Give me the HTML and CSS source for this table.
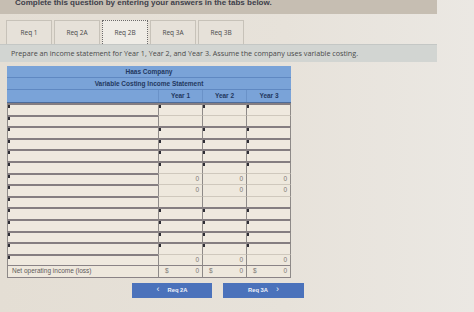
FILE: index.html
```html
<!DOCTYPE html>
<html>
<head>
<meta charset="utf-8">
<link rel="stylesheet" href="styles.css">
</head>
<body>
<div class="page">
  <div class="banner"><span>Complete this question by entering your answers in the tabs below.</span></div>
  <div class="tabs">
    <div class="tab">Req 1</div>
    <div class="tab">Req 2A</div>
    <div class="tab active">Req 2B</div>
    <div class="tab">Req 3A</div>
    <div class="tab">Req 3B</div>
  </div>
  <div class="instr">Prepare an income statement for Year 1, Year 2, and Year 3. Assume the company uses variable costing.</div>
  <div class="sheet">
    <div class="hrow title">Haas Company</div>
    <div class="hrow title">Variable Costing Income Statement</div>
    <div class="hrow cols"><span></span><span>Year 1</span><span>Year 2</span><span>Year 3</span></div>

    <div class="row"><div class="c in"></div><div class="c in"></div><div class="c in"></div><div class="c in"></div></div>
    <div class="row"><div class="c in"></div><div class="c"></div><div class="c"></div><div class="c"></div></div>
    <div class="row"><div class="c in"></div><div class="c in"></div><div class="c in"></div><div class="c in"></div></div>
    <div class="row"><div class="c in"></div><div class="c in"></div><div class="c in"></div><div class="c in"></div></div>
    <div class="row"><div class="c in"></div><div class="c in"></div><div class="c in"></div><div class="c in"></div></div>
    <div class="row"><div class="c in"></div><div class="c in"></div><div class="c in"></div><div class="c in"></div></div>
    <div class="row"><div class="c in"></div><div class="c v">0</div><div class="c v">0</div><div class="c v">0</div></div>
    <div class="row"><div class="c in"></div><div class="c v">0</div><div class="c v">0</div><div class="c v">0</div></div>
    <div class="row"><div class="c in"></div><div class="c"></div><div class="c"></div><div class="c"></div></div>
    <div class="row"><div class="c in"></div><div class="c in"></div><div class="c in"></div><div class="c in"></div></div>
    <div class="row"><div class="c in"></div><div class="c in"></div><div class="c in"></div><div class="c in"></div></div>
    <div class="row"><div class="c in"></div><div class="c in"></div><div class="c in"></div><div class="c in"></div></div>
    <div class="row"><div class="c in"></div><div class="c in"></div><div class="c in"></div><div class="c in"></div></div>
    <div class="row"><div class="c in"></div><div class="c v">0</div><div class="c v">0</div><div class="c v">0</div></div>
    <div class="row last"><div class="c lbl">Net operating income (loss)</div><div class="c v"><span>$</span>0</div><div class="c v"><span>$</span>0</div><div class="c v"><span>$</span>0</div></div>
  </div>
  <div class="nav">
    <div class="btn prev"><span class="chev">&lsaquo;</span>Req 2A</div>
    <div class="btn next">Req 3A<span class="chev">&rsaquo;</span></div>
  </div>
</div>
</body>
</html>
```
FILE: styles.css
```css
html, body {
  margin: 0;
  padding: 0;
}
body {
  width: 474px;
  height: 312px;
  overflow: hidden;
  background: linear-gradient(90deg, #e4ded4 0%, #e7e2da 60%, #ebe8e3 100%);
  font-family: "Open Sans", "Liberation Sans", sans-serif;
  color: #444;
}
.page {
  width: 437px;
  display: flex;
  flex-direction: column;
}
.banner {
  height: 14px;
  background: #c6beb2;
  overflow: hidden;
  padding-left: 15px;
}
.banner span {
  display: block;
  margin-top: -4px;
  font-family: "Liberation Sans", sans-serif;
  font-weight: bold;
  font-size: 8px;
  line-height: 14px;
  color: #3e3e4a;
}
.tabs {
  margin-top: 6px;
  display: flex;
  padding-left: 6px;
  gap: 2px;
  height: 24px;
}
.tab {
  width: 46px;
  height: 24px;
  box-sizing: border-box;
  border: 1px solid #c7c2b9;
  border-bottom: none;
  background: #e6e1d9;
  font-size: 6.5px;
  color: #4a4a4a;
  display: flex;
  align-items: center;
  justify-content: center;
}
.tab.active {
  background: #efece6;
  border: 1px dotted #6c6a6a;
  border-bottom: none;
}
.instr {
  height: 18px;
  background: #d2d5d2;
  border-top: 1px solid #c4c7c5;
  box-sizing: border-box;
  padding-left: 11px;
  font-size: 7.2px;
  line-height: 17px;
  color: #4a4a4a;
}
.sheet {
  margin-top: 4px;
  margin-left: 7px;
  width: 284px;
  display: flex;
  flex-direction: column;
  font-family: "Liberation Sans", sans-serif;
}
.hrow {
  height: 12px;
  box-sizing: border-box;
  background: #7aa3d8;
  border-bottom: 1px solid #5f88c2;
  color: #23385e;
  font-size: 6.5px;
  line-height: 11px;
  text-align: center;
}
.hrow.title {
  font-weight: bold;
}
.hrow.cols {
  height: 13px;
  display: grid;
  grid-template-columns: 151px 44px 44px 45px;
  border-bottom: 1px solid #4d6c9a;
}
.hrow.cols span {
  font-weight: bold;
  line-height: 12px;
  border-left: 1px solid #6a92c8;
}
.hrow.cols span:first-child {
  border-left: none;
}
.row {
  height: 11.6px;
  display: grid;
  grid-template-columns: 151px 44px 44px 45px;
}
.c {
  position: relative;
  box-sizing: border-box;
  background: #eee8dd;
  border-top: 1px solid #cfc8bd;
  border-left: 1px solid #8e8a88;
}
.row .c:last-child {
  border-right: 1px solid #8e8a88;
}
.c.in {
  border-top: 2px solid #857e81;
  background: #efe9df;
}
.c.in::before {
  content: "";
  position: absolute;
  left: 0;
  top: 0;
  width: 1.5px;
  height: 3px;
  background: #2f2e35;
}
.c.v {
  font-size: 6.5px;
  line-height: 10.6px;
  color: #7c7876;
  padding-right: 3px;
  display: flex;
  justify-content: flex-end;
}
.c.v span {
  margin-right: auto;
  padding-left: 6px;
}
.row.last .c {
  border-top: 1px solid #8a8386;
  border-bottom: 1px solid #8a8386;
}
.c.lbl {
  font-size: 6.5px;
  line-height: 10px;
  color: #5e5a5a;
  padding-left: 4px;
}
.nav {
  margin-top: 6px;
  margin-left: 132px;
  display: flex;
  gap: 11px;
}
.btn {
  width: 80px;
  height: 15px;
  background: #4b72bb;
  color: #eef2fa;
  font-family: "Liberation Sans", sans-serif;
  font-weight: bold;
  font-size: 5.8px;
  display: flex;
  align-items: center;
  justify-content: center;
  gap: 8px;
}
.btn.next {
  width: 81px;
}
.chev {
  font-size: 9px;
  font-weight: normal;
  line-height: 9px;
  margin-top: -1px;
}
```
